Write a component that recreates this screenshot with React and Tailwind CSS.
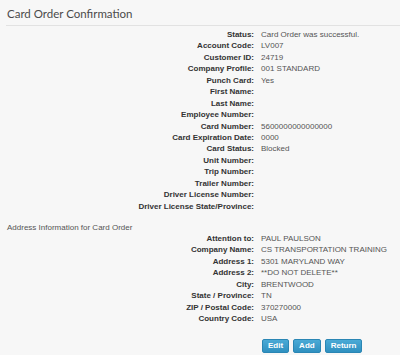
import React from "react";

const CARD_ROWS = [
  ["Status:", "Card Order was successful."],
  ["Account Code:", "LV007"],
  ["Customer ID:", "24719"],
  ["Company Profile:", "001 STANDARD"],
  ["Punch Card:", "Yes"],
  ["First Name:", ""],
  ["Last Name:", ""],
  ["Employee Number:", ""],
  ["Card Number:", "5600000000000000"],
  ["Card Expiration Date:", "0000"],
  ["Card Status:", "Blocked"],
  ["Unit Number:", ""],
  ["Trip Number:", ""],
  ["Trailer Number:", ""],
  ["Driver License Number:", ""],
  ["Driver License State/Province:", ""],
];

const ADDRESS_ROWS = [
  ["Attention to:", "PAUL PAULSON"],
  ["Company Name:", "CS TRANSPORTATION TRAINING"],
  ["Address 1:", "5301 MARYLAND WAY"],
  ["Address 2:", "**DO NOT DELETE**"],
  ["City:", "BRENTWOOD"],
  ["State / Province:", "TN"],
  ["ZIP / Postal Code:", "370270000"],
  ["Country Code:", "USA"],
];

function Rows({ rows }) {
  return (
    <div className="grid grid-cols-[254px_1fr] auto-rows-[11.45px]">
      {rows.map(([label, value]) => (
        <React.Fragment key={label}>
          <div className="leading-[11.45px] text-right font-bold text-[#333] whitespace-nowrap">{label}</div>
          <div className="leading-[11.45px] pl-[7px] text-[#555] whitespace-nowrap">{value}</div>
        </React.Fragment>
      ))}
    </div>
  );
}

function Btn({ children }) {
  return (
    <button className="h-[14px] px-[5px] rounded-[2px] border border-[#2a86b4] bg-gradient-to-b from-[#4aaad6] to-[#2f90c0] text-white font-bold text-[8px] leading-[12px]">
      {children}
    </button>
  );
}

export default function App() {
  return (
    <div className="w-[400px] h-[355px] bg-[#f7f7f7] overflow-hidden text-[8px] font-['Liberation_Sans',Arial,sans-serif]">
      <div className="ml-[6px] pt-[7px] pb-[4px] border-b border-[#e2e2e2]">
        <h1 className="pl-[1px] text-[11.5px] leading-[14px] text-[#4a4a4a] font-['Lato','Noto_Sans',sans-serif]">Card Order Confirmation</h1>
      </div>
      <div className="pt-[3px]">
        <Rows rows={CARD_ROWS} />
      </div>
      <div className="pl-[7px] pt-[10px] h-[21px] leading-[11.45px] text-[#555]">Address Information for Card Order</div>
      <Rows rows={ADDRESS_ROWS} />
      <div className="flex gap-[4px] pl-[262px] pt-[14px]">
        <Btn>Edit</Btn>
        <Btn>Add</Btn>
        <Btn>Return</Btn>
      </div>
    </div>
  );
}
